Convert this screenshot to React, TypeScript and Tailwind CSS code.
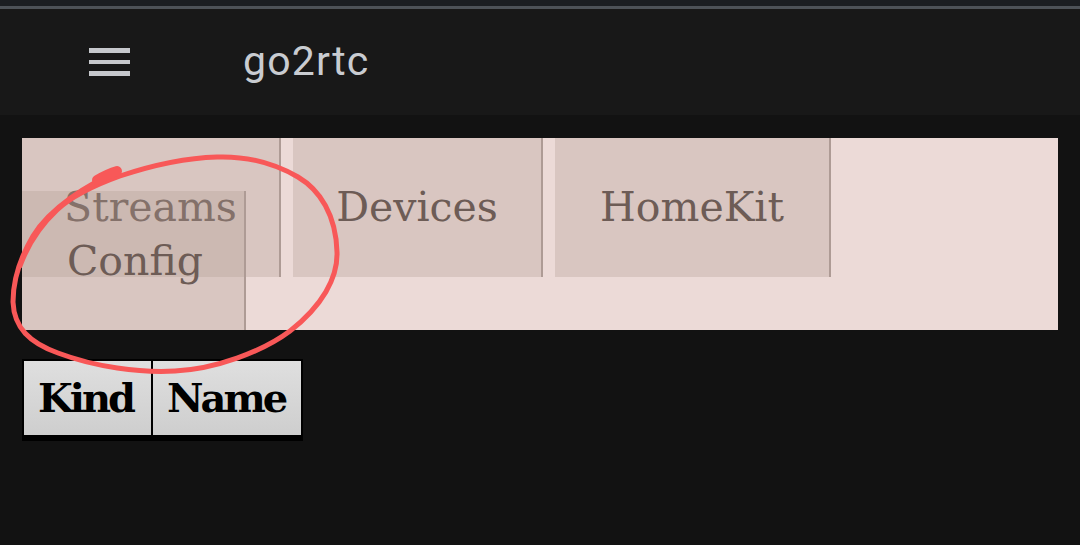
import React from "react";

const serif = { fontFamily: '"DejaVu Serif", "Liberation Serif", serif' };

function Tab({ label, w }: { label: string; w: string }) {
  return (
    <div
      className={`${w} h-[139px] shrink-0 flex items-center justify-center border-r-2 border-[#ae9b95] bg-[rgba(178,157,148,0.33)] text-[41px] leading-none text-[#6d5c56]`}
      style={serif}
    >
      {label}
    </div>
  );
}

export default function App() {
  return (
    <div className="relative w-[1080px] h-[545px] overflow-hidden bg-[#121212]">
      <div className="h-[6px] bg-[#1b1e22]" />
      <div className="h-[3px] bg-[#4d5258]" />
      <header className="h-[106px] bg-[#181818] flex items-center">
        <div className="ml-[89px] w-[41px] flex flex-col gap-[7px]">
          <div className="h-[4.5px] bg-[#c6c8cc]" />
          <div className="h-[4.5px] bg-[#c6c8cc]" />
          <div className="h-[4.5px] bg-[#c6c8cc]" />
        </div>
        <div
          className="ml-[113px] text-[41px] leading-none text-[#c9ccd1] tracking-[1.2px] pb-[2px]"
          style={{ fontFamily: 'Roboto, "Noto Sans", sans-serif' }}
        >
          go2rtc
        </div>
      </header>
      <main className="px-[22px] pt-[23px]">
        <nav className="relative h-[192px] bg-[#ecdad7] flex items-start gap-[12px]">
          <Tab label="Streams" w="w-[259px]" />
          <Tab label="Devices" w="w-[250px]" />
          <Tab label="HomeKit" w="w-[276px]" />
          <div
            className="absolute left-0 top-[53px] w-[224px] h-[139px] flex items-center pl-[45px] pt-[2px] border-r-2 border-[#ae9b95] bg-[rgba(178,157,148,0.33)] text-[41px] leading-none text-[#6d5c56]"
            style={serif}
          >
            Config
          </div>
        </nav>
        <div className="mt-[29px] inline-flex gap-[2px] bg-black p-[2px] pb-[6px]">
          <div
            className="w-[127px] h-[74px] flex items-center pl-[14px] bg-gradient-to-b from-[#dfdfdf] to-[#cecece] text-[40px] font-bold tracking-[-3px] text-black"
            style={serif}
          >
            Kind
          </div>
          <div
            className="w-[148px] h-[74px] flex items-center pl-[14px] bg-gradient-to-b from-[#dfdfdf] to-[#cecece] text-[40px] font-bold tracking-[-3px] text-black"
            style={serif}
          >
            Name
          </div>
        </div>
      </main>
      <svg
        className="absolute left-0 top-0 pointer-events-none"
        width="1080"
        height="545"
        viewBox="0 0 1080 545"
        fill="none"
      >
        <path
          d="M117,172 C88,184 50,208 33,236 C20,258 13,282 13,302 C14,328 30,343 58,353 C95,367 140,373 175,371 C215,369 262,352 290,331 C322,306 338,278 337,252 C336,215 320,190 298,177 C272,162 245,156 217,157 C185,158 150,166 120,176 C95,185 72,196 57,210 C40,226 28,244 20,266"
          stroke="#f85858"
          strokeWidth="5"
          strokeLinecap="round"
          strokeLinejoin="round"
        />
        <path d="M117,171 C110,173 104,176 97,180" stroke="#f85858" strokeWidth="10" strokeLinecap="round" />
      </svg>
    </div>
  );
}
